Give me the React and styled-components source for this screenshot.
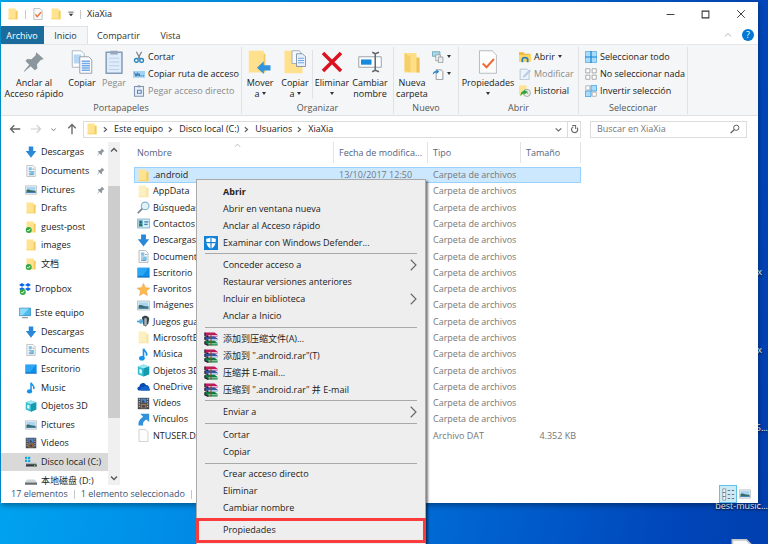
import { useState } from "react";
import styled, { createGlobalStyle } from "styled-components";

const Svg = ({ size = 12, children }) => (
  <svg width={size} height={size} viewBox="0 0 16 16" fill="none" aria-hidden="true">
    {children}
  </svg>
);

const GreenTick = () => (
  <>
    <circle cx="5" cy="12" r="4" fill="#35a845" />
    <path d="M3 12l1.500 1.500L7 10.500" stroke="#fff" strokeWidth="1.300" />
  </>
);

const FolderShape = ({ pale }) => (
  <>
    <path d="M2 0.500h9.500v3H14V15H2z" fill={pale ? "#fdf0c0" : "#ffe391"} />
    <path d="M11.500 3.500H14V15h-2.500z" fill={pale ? "#f6e3a5" : "#f3ca5c"} />
    <path d="M2 13.500h12V15H2z" fill={pale ? "#f8e9b4" : "#f8d773"} />
  </>
);

const PageShape = () => (
  <path d="M2.500 0.500h8l3 3v12h-11z" fill="#fafafa" stroke="#a9adb2" />
);

const drawings = {
  folder: <FolderShape />,
  hidden: <FolderShape pale />,
  synced: (
    <>
      <FolderShape />
      <GreenTick />
    </>
  ),
  file: <path d="M2.500 0.500h8l3 3v12h-11z" fill="#fdfdfd" stroke="#c4c6c8" />,
  down: <path d="M5 0.500h6v6h4L8 15.500 1 6.500h4z" fill="#2b88d8" />,
  documents: (
    <>
      <PageShape />
      <path d="M5 3h4v4H5zM7 8h5v5H7z" fill="#7cc0e6" />
      <path d="M5 8.500h2M5 11h2M5 13h6M10 5.500h2" stroke="#4289b8" />
    </>
  ),
  pictures: (
    <>
      <path d="M0.500 2.500h15v11H0.500z" fill="#f5f7f8" stroke="#aab4bc" />
      <path d="M2 4h12v8H2z" fill="#a8d6f2" />
      <path d="M2 8c4-2 6 2 12 1v3H2z" fill="#38685e" />
      <path d="M2 10.500h12V12H2z" fill="#4283b9" />
    </>
  ),
  dropbox: (
    <>
      <path d="M4 0l4 2.500L4 5 0 2.500zM12 0l4 2.500L12 5 8 2.500zM4 5.500L8 8l-4 2.500L0 8zM12 5.500L16 8l-4 2.500L8 8z" fill="#0a63f0" />
      <GreenTick />
    </>
  ),
  computer: (
    <>
      <path d="M0.500 1.500h15v10H0.500z" fill="#4dbdf0" stroke="#2d83b8" />
      <path d="M1 2h12L5 11H1z" fill="#8edaf8" />
      <path d="M4 13.500h8v1.500H4z" fill="#8a9298" />
    </>
  ),
  desktop: (
    <>
      <path d="M0.500 2h15v12H0.500z" fill="#108ee9" />
      <path d="M1 2.500h13L7 12H1z" fill="#2aa6f4" />
      <path d="M0.500 13h15v1H0.500z" fill="#0c62ac" />
    </>
  ),
  music: (
    <>
      <ellipse cx="6" cy="12.500" rx="3.500" ry="2.800" fill="#1592ea" />
      <path d="M8 12.500V1c1 3 5.500 4 3.500 8.500" stroke="#1592ea" strokeWidth="2" />
    </>
  ),
  cube: (
    <>
      <path d="M1 3l7-2.500L15 3v9.500L8 15.500 1 12.500z" fill="#38bcd0" />
      <path d="M1 3l7-2.500L15 3 8 5.500z" fill="#9be8ef" />
      <path d="M8 5.500L15 3v9.500l-7 3z" fill="#149bb0" />
      <path d="M3 6l3 1v5l-3-1z" fill="#dffaff" />
    </>
  ),
  videos: (
    <>
      <path d="M1 1h14v14H1z" fill="#434850" />
      <path d="M4.500 2h7v5.500h-7z" fill="#4d86cc" />
      <path d="M4.500 8.500h7V14h-7z" fill="#b0763c" />
      <path d="M7 3l3 4H6zM6 10h4v3H6z" fill="#3c4252" />
      <path d="M2.800 2v12M13.200 2v12" stroke="#d9dde0" strokeWidth="1.200" strokeDasharray="1.500 1.500" />
    </>
  ),
  disk: (
    <>
      <path d="M0 1h3v3H0zM4 1h3v3H4zM0 5h3v3H0zM4 5h3v3H4z" fill="#16a7df" />
      <path d="M2 10h13l1 4H1z" fill="#30363b" />
      <path d="M3 9h11l1 2H2z" fill="#aeb5ba" />
      <circle cx="13" cy="12.700" r="0.900" fill="#5ce06c" />
    </>
  ),
  drive: (
    <>
      <path d="M3 6h10l3 4H0z" fill="#cfd4d7" />
      <path d="M0 10h16v3H0z" fill="#656c71" />
    </>
  ),
  search: (
    <>
      <circle cx="10" cy="6" r="4.700" fill="#dff3fd" stroke="#8db4c9" strokeWidth="1.500" />
      <path d="M6.500 9.500L1 15" stroke="#7b8994" strokeWidth="2.200" />
    </>
  ),
  contacts: (
    <>
      <path d="M0.500 2.500h15v11H0.500z" fill="#d5eefa" stroke="#72a8c2" />
      <path d="M2 4h5v8H2z" fill="#4d9fba" />
      <circle cx="4.500" cy="6.500" r="1.300" fill="#1d4c56" />
      <path d="M2.500 11c0-4 4-4 4 0z" fill="#3f7447" />
      <path d="M9 6h5M9 9h4" stroke="#367fa8" strokeWidth="1.500" />
    </>
  ),
  star: (
    <path d="M8 0.500l2.300 5.200 5.500.6-4.200 3.600 1.300 5.600L8 12.600l-4.900 2.900 1.300-5.600L.2 6.300l5.500-.6z" fill="#fdb94d" stroke="#e79638" strokeWidth="0.600" />
  ),
  games: (
    <>
      <path d="M6 3c3-4 9-2 9 2l-1 5-3 4-3-1z" fill="#3b4349" />
      <path d="M9 4h3v9H9z" fill="#aab5bc" />
      <path d="M0 7h4V5l3 3-3 3V9H0z" fill="#3299d3" />
      <circle cx="5" cy="8" r="3" fill="#5aaedd" fillOpacity="0.700" />
    </>
  ),
  cloud: (
    <>
      <path d="M2 13c-3-2-1-5 1-5 0-4 6-6 8-2 4 0 5 4 4 7z" fill="#0a4bb3" />
      <path d="M5 13c-2-3 1-5 3-4 2-3 6-1 6 1 3 1 2 3 1 3z" fill="#1565cf" />
    </>
  ),
  link: <path d="M4 1h11v10l-3.500-3C8 10 7 12 7.500 15.500H2C1 10 4 7 7.500 4.500z" fill="#3092dc" />,
  pin: (
    <path d="M9.500 1L15 6.500l-2 .5-3 3 .2 3.300L8 14 5 11l-4.500 4.500L0 15l4.200-4.800L2 8l.8-2.200L6 6l3-3z" fill="#8c969e" />
  ),
  back: <path d="M15 8H2M7 3L2 8l5 5" stroke="#666" strokeWidth="1.800" />,
  forward: <path d="M1 8h13M9 3l5 5-5 5" stroke="#cfcfcf" strokeWidth="1.600" />,
  up: <path d="M8 15V2M3 7l5-5 5 5" stroke="#666" strokeWidth="1.800" />,
  chevron: <path d="M3 6l5 4.500L13 6" stroke="#666" strokeWidth="2" />,
  scrollUp: <path d="M2 11l6-6 6 6" stroke="#555" strokeWidth="2.600" />,
  scrollDown: <path d="M2 5l6 6 6-6" stroke="#555" strokeWidth="2.600" />,
  collapse: <path d="M2 11l6-6 6 6" stroke="#999" strokeWidth="1.500" />,
  more: <path d="M5 1l7 7-7 7" stroke="#666" strokeWidth="1.500" />,
  crumb: <path d="M5 4l5 4-5 4" stroke="#555" strokeWidth="1.800" />,
  refresh: (
    <>
      <path d="M12.500 4.500A5.500 5.500 0 1 1 6 3" stroke="#666" strokeWidth="2" />
      <path d="M4 1h6v6" stroke="#666" strokeWidth="1.800" />
    </>
  ),
  find: (
    <>
      <circle cx="10" cy="6" r="4.200" stroke="#555" strokeWidth="1.500" />
      <path d="M7 9l-6 5.500" stroke="#555" strokeWidth="2" />
    </>
  ),
  minimize: <path d="M1 8h14" stroke="#444" strokeWidth="1.800" />,
  maximize: <path d="M2 2h12v12H2z" stroke="#333" strokeWidth="1.800" />,
  close: <path d="M2 2l12 12M14 2L2 14" stroke="#333" strokeWidth="1.500" />,
  check: (
    <>
      <PageShape />
      <path d="M4.500 8.500l2.500 3 5-6" stroke="#ee6b32" strokeWidth="1.800" />
    </>
  ),
  caretBar: (
    <>
      <path d="M1 3h14" stroke="#333" strokeWidth="2" />
      <path d="M2 7h12l-6 7z" fill="#333" />
    </>
  ),
  bigPin: (
    <path d="M9.500 1.500L14.500 6l-2 .7-2.500 2.800.2 2.800L8.500 13.500 5.800 10.800 1.500 14.500 1.200 14.200 4.800 9.800 2.300 7.400 3.500 6l2.800.1L9 3.600z" fill="#8b969d" />
  ),
  bigCopy: (
    <>
      <path d="M1.500 0.500h6l2 2v9h-8z" fill="#fbfdff" stroke="#a8b1ba" strokeWidth="0.600" />
      <path d="M2.500 3h5v6h-5z" fill="#b7d5f5" />
      <path d="M6.500 4.500h6l2 2v9h-8z" fill="#fbfdff" stroke="#8d99a5" strokeWidth="0.600" />
      <path d="M7.800 7.500h5.500M7.800 9h5.500M7.800 10.500h5.500M7.800 12h5.500M7.800 13.500h5.500" stroke="#72a9e6" strokeWidth="0.900" />
    </>
  ),
  bigPaste: (
    <>
      <path d="M2.800 1.500h10.500v14H2.800z" fill="#dfecfb" stroke="#869bb6" strokeWidth="1" />
      <path d="M5.500 0.500h5v2.500h-5z" fill="#98a7bb" />
      <path d="M4.500 5.500h7M4.500 8h7M4.500 10.500h7M4.500 13h7" stroke="#bed0e7" strokeWidth="0.700" />
    </>
  ),
  bigMove: (
    <>
      <path d="M0.500 0.500h10v2h1V15H0.500z" fill="#ffe08c" />
      <path d="M10.500 2.500h1V15h-1z" fill="#edc965" />
      <path d="M6 11.800L10.500 7.500v2.600H15v3.500h-4.500v2.400z" fill="#3293df" />
    </>
  ),
  bigCopyTo: (
    <>
      <path d="M1 0.500h9v2h3V15.500H1z" fill="#ffe08c" />
      <path d="M6 0.500h5l1 1.500v7H6z" fill="#f5f9ff" stroke="#8b9cab" strokeWidth="0.500" />
      <path d="M9 2.500h4l2 2v6.500H9z" fill="#e6f1ff" stroke="#8290a0" strokeWidth="0.600" />
      <path d="M10 5.500h4M10 7h4M10 8.500h4" stroke="#75a5df" strokeWidth="0.700" />
    </>
  ),
  bigDelete: <path d="M2 2l12 12M14 2L2 14" stroke="#db1020" strokeWidth="2.300" />,
  bigRename: (
    <>
      <path d="M0.500 4.500h15v7H0.500z" fill="#fff" stroke="#909ba3" strokeWidth="0.600" />
      <path d="M2 6.300h7v3.500H2z" fill="#168bdc" />
      <path d="M9.500 1.500l2 1v11l-2 1M14 1.500l-2.500 1v11l2.500 1" stroke="#60686e" strokeWidth="1" />
    </>
  ),
  bigFolder: (
    <>
      <path d="M3 2h8v3l2 1v9H3z" fill="#ffdf86" />
      <path d="M3 2l4 2.500V15l-4-1z" fill="#f6cf6a" />
      <path d="M11 5h2v10h-2z" fill="#edc15b" />
    </>
  ),
  bigProps: (
    <>
      <path d="M2.300 0.500h8.500l2.800 2.800v12.200H2.300z" fill="#fdfdfd" stroke="#a1a7ac" strokeWidth="0.500" />
      <path d="M4.500 9l2.500 2.500 5-5.500" stroke="#f06b34" strokeWidth="1.300" />
    </>
  ),
  cut: (
    <>
      <path d="M4.500 1l5 9.500M11.500 1l-5 9.500" stroke="#7b858c" strokeWidth="1.600" />
      <circle cx="4.500" cy="12.500" r="2.500" stroke="#2283bc" strokeWidth="1.700" />
      <circle cx="11.500" cy="12.500" r="2.500" stroke="#2283bc" strokeWidth="1.700" />
    </>
  ),
  path: (
    <>
      <path d="M0 4h16v9H0z" fill="#9fd3f6" />
      <path d="M2 6l2 5 2-5M6.500 11V8h2v3M10 10.500h1.500M13 10.500h1.500" stroke="#225d91" strokeWidth="1.200" />
    </>
  ),
  shortcut: (
    <>
      <path d="M2 2h12v13H2z" fill="#e6effa" stroke="#8295ad" strokeWidth="1.400" />
      <path d="M6 0.500h4v2.500H6z" fill="#8295ad" />
      <path d="M6 12V7h5v4H7" stroke="#5a83b8" strokeWidth="1.400" />
    </>
  ),
  newItem: (
    <>
      <path d="M0.500 1h10v6h-10z" fill="#a8dcec" stroke="#5798aa" />
      <path d="M5 5h6v8H5z" fill="#f6f6f6" stroke="#8a9094" />
      <path d="M8.500 8h6v7.500h-6z" fill="#e9eef1" stroke="#8a9094" />
    </>
  ),
  easy: (
    <>
      <path d="M5.500 2.500h7l2 2v11h-9z" fill="#fafafa" stroke="#92999e" strokeWidth="1.300" />
      <path d="M1 9c0-4 2-5 5-5V1.500L9.500 5 6 8V6C4 6 3 7 1 9z" fill="#2789d1" />
    </>
  ),
  open: (
    <>
      <path d="M0 1.500h6l1.500 2H15V14H0z" fill="#f0b62e" />
      <path d="M0 5h16v9H0z" fill="#ffd665" />
      <path d="M4.500 15v-4c0-3 7-3 7 0v4" stroke="#2883bf" strokeWidth="2.400" />
    </>
  ),
  edit: (
    <>
      <path d="M1.500 1.500h9l3 3v11h-12z" fill="#edf3fa" stroke="#a8b8ca" />
      <path d="M5 13l1-3 8-8 2 2-8 8z" fill="#b6cbe4" />
    </>
  ),
  history: (
    <>
      <path d="M0 0.500h10v13H0z" fill="#ffe391" />
      <circle cx="10.500" cy="10.500" r="4.800" fill="#eff3ee" stroke="#8b9495" />
      <path d="M10.500 7.500v3l2 1" stroke="#666" />
      <path d="M2 15c0-5 2-7 5-7V6l4 3.500L7 13v-2c-2 0-3 1-5 4z" fill="#25a540" />
    </>
  ),
  selectAll: (
    <>
      <path d="M0.500 0.500h15v15H0.500z" fill="#a9dcfb" stroke="#4ba3df" />
      <path d="M8 0v16M0 8h16" stroke="#1681d4" strokeWidth="1.600" />
    </>
  ),
  selectNone: (
    <path d="M1 1h5.500v5.500H1zM9.500 1H15v5.500H9.500zM1 9.500h5.500V15H1zM9.500 9.500H15V15H9.500z" fill="#fff" stroke="#a0a0a0" strokeWidth="1.200" />
  ),
  invert: (
    <>
      <path d="M1 1h5.500v5.500H1zM9.500 9.500H15V15H9.500z" fill="#fff" stroke="#a0a0a0" />
      <path d="M8 0.500h7.500V8H8zM0.500 8H8v7.500H0.500z" fill="#a9dcfb" stroke="#3594dc" />
    </>
  ),
  defender: (
    <>
      <path d="M0 0h16v16H0z" fill="#1182d8" />
      <path d="M8 1.500c2 1.300 4 1.500 5.500 1.500 0 6-1 9-5.500 11.500C3.500 12 2.500 9 2.500 3 4 3 6 2.800 8 1.500z" fill="#fff" />
      <path d="M8 1v14M2 7.500h12" stroke="#1182d8" strokeWidth="1.300" />
    </>
  ),
  rar: (
    <>
      <path d="M1 0.500h11l3.500 2.500v2H5L1 3z" fill="#c2155f" />
      <path d="M5 4h10.500" stroke="#f0d3de" />
      <path d="M1 5h11l3.500 2.500v2H5L1 8z" fill="#2d55a5" />
      <path d="M5 8.500h10.500" stroke="#d6e1f3" />
      <path d="M1 10h11l3.500 2.500v3H5L1 13z" fill="#0e7c3c" />
      <path d="M5 13.500h10.500" stroke="#cfeed8" />
      <path d="M1 0.500v3.500l4 1.500M1 5.500v3l4 1.500M1 10.500v3L5 15.500" stroke="#2a1730" strokeWidth="1.300" />
      <path d="M8 1v14.500" stroke="#8b4a2c" strokeWidth="1.200" />
    </>
  ),
  details: (
    <>
      <path d="M1 1h3.500v14H1z" fill="#f2fbff" stroke="#8e8e8e" />
      <path d="M1 5.500h3M1 10.500h3M7 3h3M12 3h3M7 8h3M12 8h3M7 13h3M12 13h3" stroke="#777" strokeWidth="1.300" />
    </>
  ),
};

const Icon = ({ name, size }) => <Svg size={size}>{drawings[name]}</Svg>;

const places = [
  { icon: "down", text: "Descargas", pinned: true },
  { icon: "documents", text: "Documents", pinned: true },
  { icon: "pictures", text: "Pictures", pinned: true },
  { icon: "folder", text: "Drafts" },
  { icon: "synced", text: "guest-post" },
  { icon: "folder", text: "images" },
  { icon: "synced", text: "文档" },
  { icon: "dropbox", text: "Dropbox", root: true },
  { icon: "computer", text: "Este equipo", root: true },
  { icon: "down", text: "Descargas" },
  { icon: "documents", text: "Documents" },
  { icon: "desktop", text: "Escritorio" },
  { icon: "music", text: "Music" },
  { icon: "cube", text: "Objetos 3D" },
  { icon: "pictures", text: "Pictures" },
  { icon: "videos", text: "Videos" },
  { icon: "disk", text: "Disco local (C:)" },
  { icon: "drive", text: "本地磁盘 (D:)" },
];

const files = [
  { icon: "folder", name: ".android", date: "13/10/2017 12:50" },
  { icon: "hidden", name: "AppData" },
  { icon: "search", name: "Búsquedas" },
  { icon: "contacts", name: "Contactos" },
  { icon: "down", name: "Descargas" },
  { icon: "documents", name: "Documentos" },
  { icon: "desktop", name: "Escritorio" },
  { icon: "star", name: "Favoritos" },
  { icon: "pictures", name: "Imágenes" },
  { icon: "games", name: "Juegos guardados" },
  { icon: "hidden", name: "MicrosoftEdge" },
  { icon: "music", name: "Música" },
  { icon: "cube", name: "Objetos 3D" },
  { icon: "cloud", name: "OneDrive" },
  { icon: "videos", name: "Vídeos" },
  { icon: "link", name: "Vínculos" },
  { icon: "file", name: "NTUSER.DAT", type: "Archivo DAT", size: "4.352 KB" },
];

const menuGroups = [
  [
    { text: "Abrir", bold: true },
    { text: "Abrir en ventana nueva" },
    { text: "Anclar al Acceso rápido" },
    { text: "Examinar con Windows Defender...", icon: "defender" },
  ],
  [
    { text: "Conceder acceso a", more: true },
    { text: "Restaurar versiones anteriores" },
    { text: "Incluir en biblioteca", more: true },
    { text: "Anclar a Inicio" },
  ],
  [
    { text: "添加到压缩文件(A)...", icon: "rar" },
    { text: '添加到 ".android.rar"(T)', icon: "rar" },
    { text: "压缩并 E-mail...", icon: "rar" },
    { text: '压缩到 ".android.rar" 并 E-mail', icon: "rar" },
  ],
  [{ text: "Enviar a", more: true }],
  [{ text: "Cortar" }, { text: "Copiar" }],
  [{ text: "Crear acceso directo" }, { text: "Eliminar" }, { text: "Cambiar nombre" }],
];

const BigTool = ({ icon, lines, width, caret, disabled }) => (
  <BigButton $width={width} disabled={disabled}>
    <Icon name={icon} size={24} />
    {lines.map((line, i) => (
      <Line key={i}>
        {line}
        {caret && i === lines.length - 1 && <Caret />}
      </Line>
    ))}
  </BigButton>
);

const SmallTool = ({ icon, text, caret, disabled, label }) => (
  <SmallButton disabled={disabled} aria-label={label}>
    <Icon name={icon} size={12} />
    {text}
    {caret && <Caret />}
  </SmallButton>
);

const Ribbon = () => (
  <RibbonBar>
    <Group $width={241}>
      <Tools>
        <BigTool icon="bigPin" lines={["Anclar al", "Acceso rápido"]} width={66} />
        <BigTool icon="bigCopy" lines={["Copiar"]} width={30} />
        <BigTool icon="bigPaste" lines={["Pegar"]} width={34} disabled />
        <Stack>
          <SmallTool icon="cut" text="Cortar" />
          <SmallTool icon="path" text="Copiar ruta de acceso" />
          <SmallTool icon="shortcut" text="Pegar acceso directo" disabled />
        </Stack>
      </Tools>
      <GroupName>Portapapeles</GroupName>
    </Group>
    <Group $width={152}>
      <Tools>
        <BigTool icon="bigMove" lines={["Mover", "a"]} width={36} caret />
        <BigTool icon="bigCopyTo" lines={["Copiar", "a"]} width={34} caret />
        <InnerRule />
        <BigTool icon="bigDelete" lines={["Eliminar", ""]} width={38} caret />
        <BigTool icon="bigRename" lines={["Cambiar", "nombre"]} width={38} />
      </Tools>
      <GroupName>Organizar</GroupName>
    </Group>
    <Group $width={65}>
      <Tools>
        <BigTool icon="bigFolder" lines={["Nueva", "carpeta"]} width={36} />
        <Stack>
          <SmallTool icon="newItem" label="Nuevo elemento" caret />
          <SmallTool icon="easy" label="Fácil acceso" caret />
        </Stack>
      </Tools>
      <GroupName>Nuevo</GroupName>
    </Group>
    <Group $width={120}>
      <Tools>
        <BigTool icon="bigProps" lines={["Propiedades", ""]} width={58} caret />
        <Stack>
          <SmallTool icon="open" text="Abrir" caret />
          <SmallTool icon="edit" text="Modificar" disabled />
          <SmallTool icon="history" text="Historial" />
        </Stack>
      </Tools>
      <GroupName>Abrir</GroupName>
    </Group>
    <Group $width={109}>
      <Tools $inset={4}>
        <Stack>
          <SmallTool icon="selectAll" text="Seleccionar todo" />
          <SmallTool icon="selectNone" text="No seleccionar nada" />
          <SmallTool icon="invert" text="Invertir selección" />
        </Stack>
      </Tools>
      <GroupName>Seleccionar</GroupName>
    </Group>
  </RibbonBar>
);

const ContextMenu = () => (
  <Menu role="menu">
    {menuGroups.map((group, i) => (
      <MenuGroup key={i}>
        {group.map((item) => (
          <MenuItem key={item.text} role="menuitem" $bold={item.bold}>
            <MenuIcon>{item.icon && <Icon name={item.icon} size={14} />}</MenuIcon>
            <MenuText>{item.text}</MenuText>
            {item.more && <Icon name="more" size={12} />}
          </MenuItem>
        ))}
        {i < menuGroups.length - 1 && <MenuRule />}
      </MenuGroup>
    ))}
    <MarkedItem role="menuitem">Propiedades</MarkedItem>
  </Menu>
);

export default function App() {
  const [selected, setSelected] = useState(".android");
  const [place, setPlace] = useState("Disco local (C:)");
  const [query, setQuery] = useState("");

  return (
    <>
      <GlobalStyle />
      <Desktop>
        <DesktopLabel $top={266} $right={6}>x</DesktopLabel>
        <DesktopLabel $top={344} $right={6}>x</DesktopLabel>
        <DesktopLabel $top={422} $right={0}>5...</DesktopLabel>
        <DesktopLabel $top={500} $right={0}>best-music...</DesktopLabel>
        <DesktopFile>
          <Icon name="file" size={28} />
        </DesktopFile>

        <Window>
          <TitleBar>
            <Icon name="folder" />
            <Rule />
            <Icon name="check" />
            <Icon name="folder" />
            <Icon name="caretBar" size={6} />
            <Rule />
            <Title>XiaXia</Title>
            <Controls>
              <IconButton aria-label="Minimizar"><Icon name="minimize" size={9} /></IconButton>
              <IconButton aria-label="Maximizar"><Icon name="maximize" size={9} /></IconButton>
              <IconButton aria-label="Cerrar"><Icon name="close" size={10} /></IconButton>
            </Controls>
          </TitleBar>

          <Tabs>
            <Tab $kind="file" $width={43}>Archivo</Tab>
            <Tab $kind="active" $width={44}>Inicio</Tab>
            <Tab $width={62}>Compartir</Tab>
            <Tab $width={42}>Vista</Tab>
            <TabsEnd>
              <Icon name="collapse" size={8} />
              <Help aria-label="Ayuda">?</Help>
            </TabsEnd>
          </Tabs>

          <Ribbon />

          <AddressRow>
            <Arrows>
              <PlainButton aria-label="Atrás"><Icon name="back" /></PlainButton>
              <PlainButton aria-label="Adelante"><Icon name="forward" /></PlainButton>
              <PlainButton aria-label="Recientes"><Icon name="chevron" size={7} /></PlainButton>
              <PlainButton aria-label="Subir"><Icon name="up" /></PlainButton>
            </Arrows>
            <Address>
              <Icon name="folder" />
              {["Este equipo", "Disco local (C:)", "Usuarios", "XiaXia"].map((crumb) => (
                <Crumb key={crumb}>
                  <Icon name="crumb" size={9} />
                  {crumb}
                </Crumb>
              ))}
              <AddressEnd>
                <PlainButton aria-label="Ubicaciones"><Icon name="chevron" size={9} /></PlainButton>
                <Refresh aria-label="Actualizar"><Icon name="refresh" size={9} /></Refresh>
              </AddressEnd>
            </Address>
            <Search>
              <SearchInput
                type="text"
                aria-label="Buscar en XiaXia"
                placeholder="Buscar en XiaXia"
                value={query}
                onChange={(e) => setQuery(e.target.value)}
              />
              <Icon name="find" size={10} />
            </Search>
          </AddressRow>

          <Content>
            <Sidebar>
              <Places>
                {places.map((item, i) => (
                  <Place
                    key={i}
                    $root={item.root}
                    $active={item.text === place}
                    onClick={() => setPlace(item.text)}
                  >
                    <Icon name={item.icon} />
                    <PlaceName>{item.text}</PlaceName>
                    {item.pinned && <Icon name="pin" size={8} />}
                  </Place>
                ))}
              </Places>
            </Sidebar>
            <ScrollBar>
              <Icon name="scrollUp" size={8} />
              <Thumb />
              <Icon name="scrollDown" size={8} />
            </ScrollBar>
            <Listing>
              <Table>
                <colgroup>
                  <col width="200" />
                  <col width="94" />
                  <col width="93" />
                  <col width="60" />
                </colgroup>
                <thead>
                  <tr>
                    <Head>
                      <HeadLabel $first>Nombre</HeadLabel>
                      <SortMark><Icon name="collapse" size={7} /></SortMark>
                    </Head>
                    <Head><HeadLabel>Fecha de modifica...</HeadLabel></Head>
                    <Head><HeadLabel>Tipo</HeadLabel></Head>
                    <Head><HeadLabel>Tamaño</HeadLabel></Head>
                  </tr>
                </thead>
                <tbody>
                  {files.map((file) => (
                    <Row
                      key={file.name}
                      $selected={file.name === selected}
                      onClick={() => setSelected(file.name)}
                    >
                      <Cell $name>
                        <FileName>
                          <Icon name={file.icon} size={13} />
                          {file.name}
                        </FileName>
                      </Cell>
                      <Cell>{file.date}</Cell>
                      <Cell>{file.type || "Carpeta de archivos"}</Cell>
                      <Cell $right>{file.size}</Cell>
                    </Row>
                  ))}
                </tbody>
              </Table>
            </Listing>
          </Content>

          <StatusBar>
            <span>17 elementos</span>
            <Rule />
            <span>1 elemento seleccionado</span>
            <Rule />
            <Views>
              <ViewButton $active aria-label="Detalles"><Icon name="details" size={13} /></ViewButton>
              <ViewButton aria-label="Iconos grandes"><Icon name="pictures" size={12} /></ViewButton>
            </Views>
          </StatusBar>
        </Window>

        <ContextMenu />
      </Desktop>
    </>
  );
}

// CSS
const GlobalStyle = createGlobalStyle`
  * {
    box-sizing: border-box;
  }
  body {
    margin: 0;
  }
  body, button, input {
    font-family: "Open Sans", "Noto Sans CJK SC", sans-serif;
    font-size: 9px;
    line-height: 10px;
    color: #222;
  }
  button {
    padding: 0;
    border: none;
    background: none;
    white-space: nowrap;
  }
  svg {
    flex: none;
    display: block;
  }
`;

const Desktop = styled.div`
  position: relative;
  display: flex;
  height: 100vh;
  padding: 2px 10px 41px 1px;
  overflow: hidden;
  background: linear-gradient(100deg, #00adf2 0%, #0093ea 25%, #0070d8 55%, #0047bb 88%, #003fae 100%);
`;

const DesktopLabel = styled.span`
  position: absolute;
  top: ${(props) => props.$top}px;
  right: ${(props) => props.$right}px;
  color: #fff;
  line-height: 12px;
  text-shadow: 0 1px 2px #000;
`;

const DesktopFile = styled.div`
  position: absolute;
  right: 12px;
  bottom: -23px;
`;

const Window = styled.main`
  position: relative;
  flex: 1;
  min-width: 0;
  display: flex;
  flex-direction: column;
  background: #fff;
  box-shadow: 0 2px 6px rgba(0, 0, 0, 0.4);
`;

const TitleBar = styled.header`
  display: flex;
  align-items: center;
  gap: 6px;
  height: 24px;
  padding-left: 6px;
`;

const Title = styled.span`
  color: #222;
`;

const Rule = styled.span`
  width: 1px;
  height: 9px;
  background: #c8c8c8;
`;

const Controls = styled.div`
  display: flex;
  margin-left: auto;
`;

const IconButton = styled.button`
  display: flex;
  align-items: center;
  justify-content: center;
  width: 35px;
  height: 22px;
`;

const Tabs = styled.nav`
  display: flex;
  height: 18px;
`;

const Tab = styled.button`
  width: ${(props) => props.$width}px;
  color: ${(props) => (props.$kind === "file" ? "#fff" : "#333")};
  background: ${(props) =>
    props.$kind === "file" ? "#1b6c9c" : props.$kind === "active" ? "#f5f6f7" : "none"};
  border-top: 1px solid ${(props) => (props.$kind === "active" ? "#dfe1e3" : "transparent")};
  border-right: 1px solid ${(props) => (props.$kind === "active" ? "#dfe1e3" : "transparent")};
`;

const TabsEnd = styled.div`
  display: flex;
  align-items: center;
  gap: 10px;
  margin-left: auto;
  padding-right: 4px;
`;

const Help = styled.button`
  width: 12px;
  height: 12px;
  border-radius: 50%;
  background: #0078d4;
  color: #fff;
`;

const RibbonBar = styled.section`
  display: flex;
  height: 72px;
  padding: 2px 0 1px;
  background: #f5f6f7;
  border-top: 1px solid #e6e8ea;
  border-bottom: 1px solid #dfe1e3;
`;

const Group = styled.div`
  display: flex;
  flex-direction: column;
  justify-content: space-between;
  width: ${(props) => props.$width}px;
  border-right: 1px solid #e0e2e4;
`;

const Tools = styled.div`
  display: flex;
  padding: 3px 0 0 ${(props) => props.$inset || 0}px;
`;

const GroupName = styled.div`
  text-align: center;
  line-height: 12px;
  color: #555;
`;

const BigButton = styled.button`
  display: flex;
  flex-direction: column;
  align-items: center;
  flex: none;
  width: ${(props) => props.$width}px;
  color: ${(props) => (props.disabled ? "#8a8a8a" : "#222")};

  svg {
    margin-bottom: 3px;
  }
`;

const Line = styled.span`
  display: flex;
  align-items: center;
  gap: 2px;
  height: 11px;
`;

const Caret = styled.i`
  border: 2px solid transparent;
  border-top: 3px solid #333;
  border-bottom: none;
`;

const InnerRule = styled.span`
  width: 1px;
  background: #e0e2e4;
`;

const Stack = styled.div`
  display: flex;
  flex-direction: column;
`;

const SmallButton = styled.button`
  display: flex;
  align-items: center;
  gap: 3px;
  height: 17px;
  margin-top: -2px;
  margin-bottom: 2px;
  padding-left: 2px;
  color: ${(props) => (props.disabled ? "#8a8a8a" : "#222")};
`;

const AddressRow = styled.div`
  display: flex;
  align-items: center;
  height: 26px;
  padding-right: 11px;
`;

const Arrows = styled.div`
  display: flex;
  align-items: center;
  justify-content: space-between;
  width: 82px;
  padding: 0 5px 0 8px;
`;

const PlainButton = styled.button`
  display: flex;
  align-items: center;
`;

const Address = styled.div`
  flex: 1;
  display: flex;
  align-items: center;
  height: 17px;
  padding-left: 2px;
  border: 1px solid #dcdcdc;
`;

const Crumb = styled.button`
  display: flex;
  align-items: center;
  gap: 4px;
  margin-left: 3px;
`;

const AddressEnd = styled.div`
  display: flex;
  align-items: center;
  gap: 4px;
  height: 100%;
  margin-left: auto;
`;

const Refresh = styled.button`
  display: flex;
  align-items: center;
  height: 100%;
  padding: 0 1px 0 2px;
  border-left: 1px solid #dcdcdc;
`;

const Search = styled.label`
  display: flex;
  align-items: center;
  width: 157px;
  height: 17px;
  margin-left: 9px;
  padding: 0 6px;
  border: 1px solid #dcdcdc;
`;

const SearchInput = styled.input`
  flex: 1;
  min-width: 0;
  padding: 0;
  border: none;
  outline: none;

  &::placeholder {
    color: #777;
  }
`;

const Content = styled.div`
  flex: 1;
  min-height: 0;
  display: flex;
`;

const Sidebar = styled.nav`
  width: 107px;
  height: 100%;
  overflow: hidden;
`;

const Places = styled.div`
  display: flex;
  flex-direction: column;
  height: 348px;
  padding-top: 1px;
`;

const Place = styled.button`
  display: flex;
  align-items: center;
  gap: 4px;
  flex: 1;
  margin: ${(props) => (props.$root ? "6px 0 0" : "0")};
  padding: 0 3px 0 ${(props) => (props.$root ? 18 : 24)}px;
  text-align: left;
  background: ${(props) => (props.$active ? "#d9d9d9" : "none")};
`;

const PlaceName = styled.span`
  flex: 1;
`;

const ScrollBar = styled.div`
  display: flex;
  flex-direction: column;
  align-items: center;
  width: 12px;
  padding: 4px 0 3px;
  background: #f0f0f0;
`;

const Thumb = styled.div`
  width: 100%;
  height: 69%;
  margin: 32px 0 auto;
  background: #cdcdcd;
`;

const Listing = styled.div`
  flex: 1;
  padding-left: 14px;
`;

const Table = styled.table`
  width: 447px;
  height: 302px;
  table-layout: fixed;
  border-collapse: collapse;
`;

const Head = styled.th`
  position: relative;
  height: 25px;
  padding: 0;
  vertical-align: top;
  font-weight: 400;
  text-align: left;
  white-space: nowrap;
  color: #56657f;
`;

const HeadLabel = styled.div`
  padding-left: ${(props) => (props.$first ? 3 : 5)}px;
  border-right: 1px solid #e3e3e3;
  line-height: 21px;
`;

const SortMark = styled.span`
  position: absolute;
  top: 0;
  left: 50%;
`;

const Row = styled.tr`
  background: ${(props) => (props.$selected ? "#cce8ff" : "none")};
  outline: ${(props) => (props.$selected ? "1px solid #99d1ff" : "none")};
  outline-offset: -1px;
`;

const Cell = styled.td`
  padding: 0 5px 0 ${(props) => (props.$name ? 3 : 5)}px;
  color: ${(props) => (props.$name ? "#222" : "#777")};
  text-align: ${(props) => (props.$right ? "right" : "left")};
  white-space: nowrap;
`;

const FileName = styled.span`
  display: flex;
  align-items: center;
  gap: 3px;
`;

const StatusBar = styled.footer`
  display: flex;
  align-items: center;
  gap: 6px;
  height: 18px;
  padding: 0 6px 0 10px;
  color: #3c5070;
`;

const Views = styled.div`
  display: flex;
  gap: 1px;
  margin-left: auto;
`;

const ViewButton = styled.button`
  display: flex;
  align-items: center;
  justify-content: center;
  width: ${(props) => (props.$active ? 18 : 14)}px;
  height: 18px;
  border: 1px solid ${(props) => (props.$active ? "#62c1e6" : "transparent")};
  background: ${(props) => (props.$active ? "#cbeaf7" : "none")};
`;

const Menu = styled.div`
  position: absolute;
  top: 179px;
  bottom: 0;
  left: 196px;
  width: 230px;
  display: flex;
  flex-direction: column;
  padding: 3px 0 1px;
  background: #eee;
  border: 1px solid #aaa;
  border-bottom: none;
  box-shadow: 2px 2px 2px rgba(0, 0, 0, 0.5);
`;

const MenuGroup = styled.div`
  display: contents;
`;

const MenuItem = styled.button`
  display: flex;
  align-items: center;
  flex: none;
  height: 17px;
  padding: 0 6px 0 7px;
  text-align: left;
  font-weight: ${(props) => (props.$bold ? 700 : 400)};
`;

const MenuIcon = styled.span`
  width: 19px;
`;

const MenuText = styled.span`
  flex: 1;
`;

const MenuRule = styled.div`
  flex: 1;
  margin: 0 8px;
  background: linear-gradient(#a8a8a8, #a8a8a8) center / 100% 1px no-repeat;
`;

const MarkedItem = styled.button`
  flex: none;
  height: 25px;
  margin: 1px -1px 0;
  padding-left: 24px;
  border: 3px solid #fa3c3c;
  text-align: left;
`;
